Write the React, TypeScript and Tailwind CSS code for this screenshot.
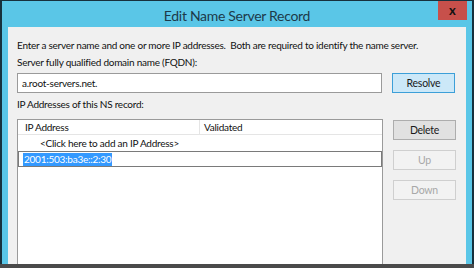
import React from "react";

const font = { fontFamily: 'Lato, "Noto Sans", sans-serif' };

const SideButton: React.FC<{ label: string; disabled?: boolean; primary?: boolean }> = ({
  label,
  disabled,
  primary,
}) => (
  <button
    className={
      primary
        ? "w-[63px] h-[20px] border border-[#3c9fd8] bg-[#cce8f8] text-[10.5px] text-[#1a1a1a] leading-none"
        : disabled
        ? "w-[63px] h-[20px] border border-[#cfcfcf] bg-[#f2f2f2] text-[10.5px] text-[#a8a8a8] leading-none"
        : "w-[63px] h-[20px] border border-[#adadad] bg-[#e1e1e1] text-[10.5px] text-[#1a1a1a] leading-none"
    }
  >
    {label}
  </button>
);

export default function App() {
  return (
    <div className="w-[474px] h-[268px] overflow-hidden bg-[#17313d] flex flex-col" style={font}>
      <div className="flex-1 mx-[2px] mt-[1px] bg-[#5ac6e7] flex flex-col overflow-hidden">
        <div className="h-[26px] flex items-start relative">
          <div className="flex-1 text-center text-[14px] tracking-[-0.3px] text-[#1d3a4a] pt-[4px]">
            Edit Name Server Record
          </div>
          <div className="absolute right-[5px] top-0 w-[29px] h-[19px] bg-[#c7504b] flex items-center justify-center text-[13px] font-bold text-[#111] leading-none">
            x
          </div>
        </div>
        <div className="flex-1 mx-[6px] bg-[#f0f0f0] px-[9px] pt-[10px] text-[10px] tracking-[-0.25px] text-[#111] overflow-hidden">
          <div className="leading-[16px] whitespace-nowrap">
            Enter a server name and one or more IP addresses.&nbsp; Both are required to identify the name server.
          </div>
          <div className="leading-[16px] mt-[1px]">Server fully qualified domain name (FQDN):</div>
          <div className="flex items-center mt-[3px]">
            <div className="w-[365px] h-[20px] border border-[#9a9a9a] bg-white flex items-center px-[4px]">
              a.root-servers.net.
            </div>
            <div className="ml-[10px]">
              <SideButton label="Resolve" primary />
            </div>
          </div>
          <div className="leading-[16px] mt-[3px]">IP Addresses of this NS record:</div>
          <div className="flex items-start mt-[7px]">
            <div className="w-[366px] h-[160px] border border-[#9a9a9a] bg-white">
              <div className="h-[15px] flex border-b border-[#e5e5e5] leading-[14px]">
                <div className="w-[182px] pl-[7px] border-r border-[#e5e5e5]">IP Address</div>
                <div className="pl-[4px]">Validated</div>
              </div>
              <div className="h-[16px] pl-[22px] leading-[16px]">&lt;Click here to add an IP Address&gt;</div>
              <div className="h-[16px] border border-[#7a7a7a] flex items-center pl-[4px]">
                <span className="bg-[#3399ff] text-white leading-[13px] px-[1px]">2001:503:ba3e::2:30</span>
              </div>
            </div>
            <div className="ml-[10px] mt-[1px] flex flex-col gap-[10px]">
              <SideButton label="Delete" />
              <SideButton label="Up" disabled />
              <SideButton label="Down" disabled />
            </div>
          </div>
        </div>
      </div>
      <div className="h-[4px] bg-[#4a4a4a]" />
    </div>
  );
}
